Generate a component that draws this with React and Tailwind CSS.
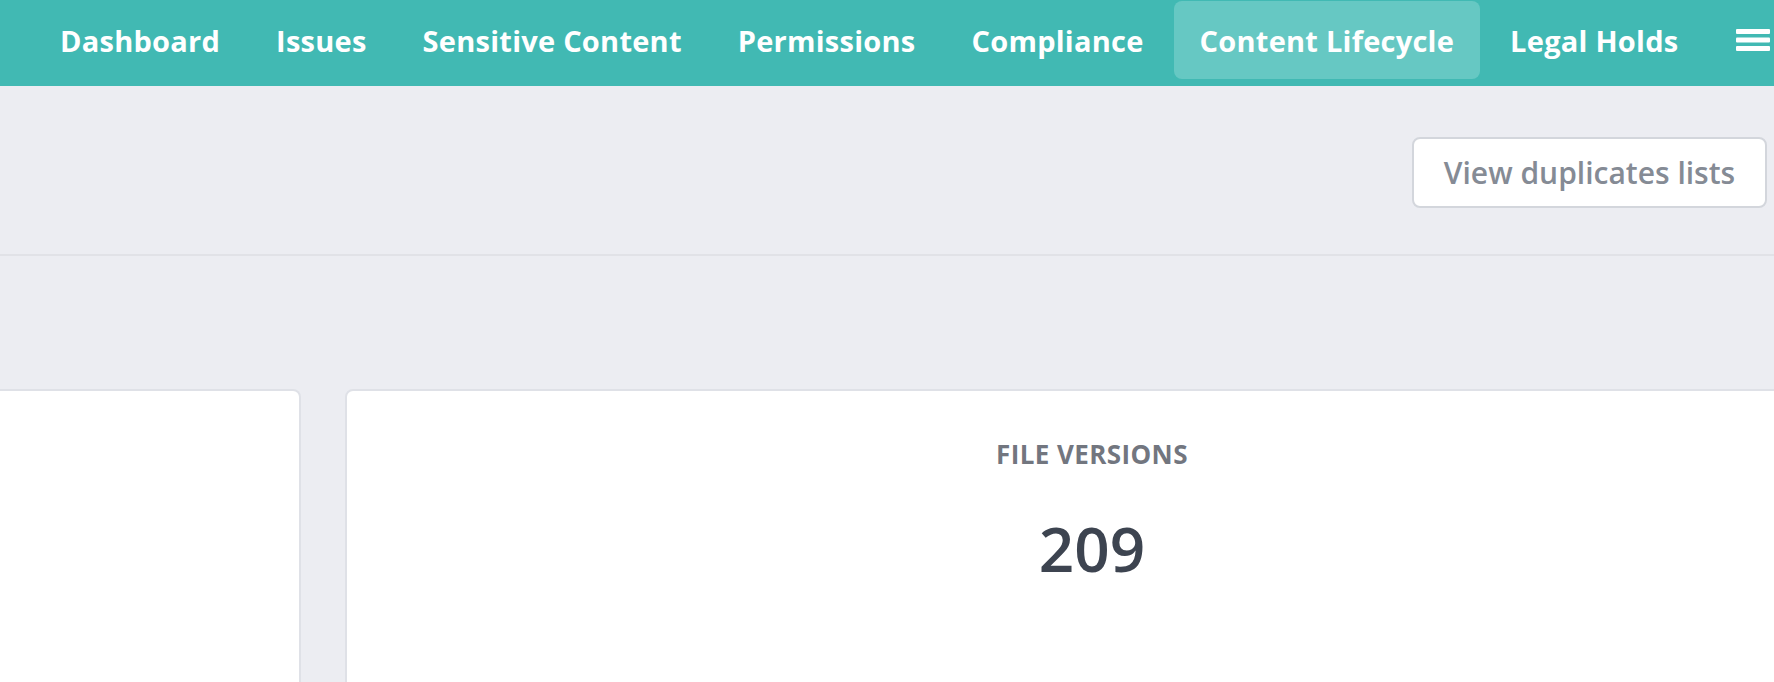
import React from "react";

const navItems = [
  "Dashboard",
  "Issues",
  "Sensitive Content",
  "Permissions",
  "Compliance",
  "Content Lifecycle",
  "Legal Holds",
];

const App = () => {
  const active = "Content Lifecycle";

  return (
    <div className="min-h-screen bg-[#ecedf2] overflow-hidden font-['Open_Sans',sans-serif]">
      <nav className="h-[86px] bg-[#41b9b3] flex items-start pl-[34px] gap-[4px]">
        {navItems.map((item) => (
          <a
            key={item}
            href="#"
            className={
              item === active
                ? "mt-[1px] h-[78px] px-[26px] rounded-lg flex items-center shrink-0 bg-[#66c8c3] text-white font-bold text-[29px] tracking-[0.25px] leading-none whitespace-nowrap"
                : "mt-[1px] h-[78px] px-[26px] rounded-lg flex items-center shrink-0 text-white font-bold text-[29px] tracking-[0.25px] leading-none whitespace-nowrap"
            }>
            {item}
          </a>
        ))}
        <button className="mt-[1px] h-[78px] pl-[28px] pr-[26px] flex items-center shrink-0">
          <svg width="34" height="22" viewBox="0 0 34 22" fill="#ffffff">
            <rect x="0" y="0" width="34" height="5" rx="1" />
            <rect x="0" y="8.5" width="34" height="5" rx="1" />
            <rect x="0" y="17" width="34" height="5" rx="1" />
          </svg>
        </button>
      </nav>

      <header className="h-[170px] flex justify-end items-start pt-[51px] pr-[7px] border-b-2 border-[#e1e2e7]">
        <button className="h-[71px] w-[355px] bg-white border-2 border-[#d3d6dc] rounded-lg flex items-center justify-center text-[30px] font-semibold text-[#858b95] leading-none">
          View duplicates lists
        </button>
      </header>

      <main className="flex gap-[44px] pt-[133px]">
        <div className="w-[301px] h-[320px] shrink-0 bg-white border-2 border-l-0 border-[#dfe1e7] rounded-r-lg"></div>
        <div className="w-[1494px] h-[320px] shrink-0 bg-white border-2 border-[#dfe1e7] rounded-lg flex flex-col items-center pt-[50px]">
          <h3 className="text-[26px] leading-none font-bold tracking-[0.4px] text-[#72767f] uppercase">
            File Versions
          </h3>
          <p className="mt-[50px] text-[62px] leading-none font-semibold text-[#3d4450]">209</p>
        </div>
      </main>
    </div>
  );
};

export default App;
